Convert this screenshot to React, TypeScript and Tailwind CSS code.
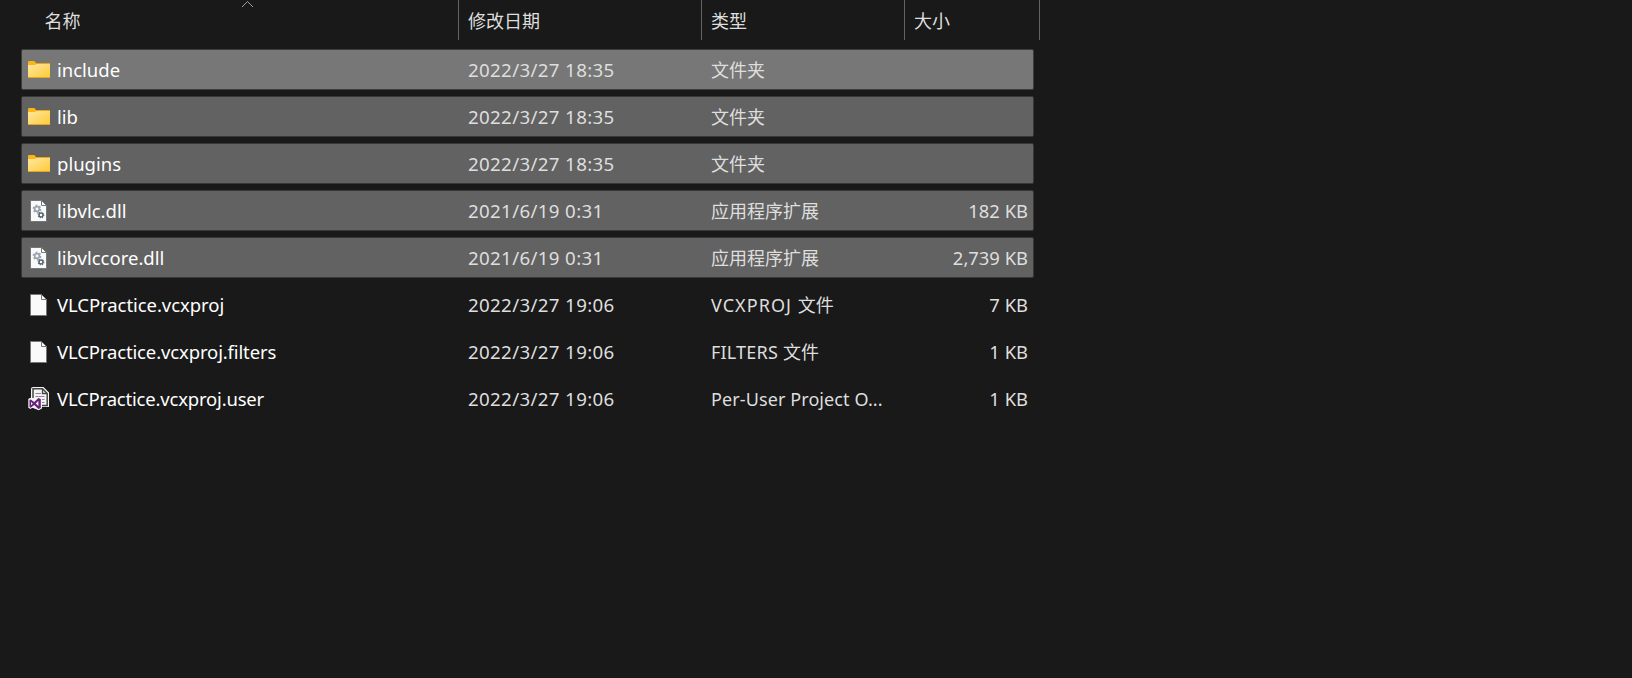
const FolderIcon = () => (
  <svg width="22" height="18" viewBox="0 0 22 18" fill="none">
    <defs>
      <linearGradient id="folder" x1="0" y1="0" x2="1" y2="1">
        <stop offset="0" stopColor="#ffe8a0" />
        <stop offset="1" stopColor="#fdc935" />
      </linearGradient>
    </defs>
    <path d="M0 1.2Q0 0 1.2 0H6.4L8 2H22V5H0Z" fill="#fcb515" />
    <path d="M0 4H6.8L8.6 3H22V17H0Z" fill="url(#folder)" />
    <path d="M8 2.5H22M0 16.5H22" stroke="#eaa51f" />
  </svg>
);

const PageShape = () => (
  <>
    <path d="M0.5 0.5H11.5L16.5 5.5V21.5H0.5Z" fill="#fafafa" stroke="#777777" />
    <path d="M11.5 0.5V5.5H16.5" stroke="#777777" />
  </>
);

const FileIcon = () => (
  <svg width="17" height="22" viewBox="0 0 17 22" fill="none">
    <PageShape />
  </svg>
);

const DllIcon = () => (
  <svg width="17" height="22" viewBox="0 0 17 22" fill="none">
    <PageShape />
    <circle cx="7" cy="9" r="3.6" stroke="#9aa5b0" strokeWidth="1.6" strokeDasharray="1.9 1.87" />
    <circle cx="7" cy="9" r="2.3" stroke="#9aa5b0" strokeWidth="1.8" />
    <circle cx="11" cy="15" r="2.8" stroke="#56616b" strokeWidth="1.1" strokeDasharray="1.2 1" />
    <circle cx="11" cy="15" r="1.9" stroke="#56616b" strokeWidth="1.3" />
  </svg>
);

const VsIcon = () => (
  <svg width="22" height="25" viewBox="0 0 22 25" fill="none">
    <path d="M5 1H15.5L21 6.5V21H13.5L12 23.5L9 23.5L1 20.5V13L3 12V3Q3 1 5 1Z" fill="#f4f4f4" />
    <path d="M5 12V2.8H14.5L19.2 7.5V19.5H14" stroke="#454545" strokeWidth="1.5" />
    <path d="M14.5 3V7.5H19" stroke="#454545" strokeWidth="1.3" />
    <path d="M7.5 7.5H13M7.5 10.5H16.5M14 13.5H16.5M14 16.5H16.5" stroke="#888888" />
    <path
      d="M0.3 13L2.5 11.8L6 14.5L10.2 10.5L14 12V22.5L10.2 24.3L6 20.4L2.5 23L0.3 21.8Z"
      fill="#f4f4f4"
    />
    <path
      fillRule="evenodd"
      d="M1.5 14L2.7 13.4L6.2 16.1L10.4 12L12.8 13V22L10.4 23L6.2 19L2.7 21.7L1.5 21.1ZM3 15.9V19.2L4.8 17.5ZM10.4 15L7.7 17.5L10.4 20Z"
      fill="#68217a"
    />
  </svg>
);

const icons = {
  folder: <FolderIcon />,
  dll: <DllIcon />,
  file: <FileIcon />,
  vs: <VsIcon />,
};

type Entry = {
  name: string;
  nameTracking?: string;
  date: string;
  type: string;
  typeTracking?: string;
  size?: string;
  icon: keyof typeof icons;
  state?: "hover" | "selected";
};

const entries: Entry[] = [
  { name: "include", date: "2022/3/27 18:35", type: "文件夹", icon: "folder", state: "hover" },
  { name: "lib", date: "2022/3/27 18:35", type: "文件夹", icon: "folder", state: "selected" },
  { name: "plugins", date: "2022/3/27 18:35", type: "文件夹", icon: "folder", state: "selected" },
  { name: "libvlc.dll", date: "2021/6/19 0:31", type: "应用程序扩展", size: "182 KB", icon: "dll", state: "selected" },
  { name: "libvlccore.dll", date: "2021/6/19 0:31", type: "应用程序扩展", size: "2,739 KB", icon: "dll", state: "selected" },
  {
    name: "VLCPractice.vcxproj",
    nameTracking: "tracking-[-0.06px]",
    date: "2022/3/27 19:06",
    type: "VCXPROJ 文件",
    typeTracking: "tracking-[1.05px]",
    size: "7 KB",
    icon: "file",
  },
  {
    name: "VLCPractice.vcxproj.filters",
    nameTracking: "tracking-[-0.13px]",
    date: "2022/3/27 19:06",
    type: "FILTERS 文件",
    typeTracking: "tracking-[0.2px]",
    size: "1 KB",
    icon: "file",
  },
  {
    name: "VLCPractice.vcxproj.user",
    nameTracking: "tracking-[-0.19px]",
    date: "2022/3/27 19:06",
    type: "Per-User Project O...",
    typeTracking: "tracking-[0.1px]",
    size: "1 KB",
    icon: "vs",
  },
];

const rowStyles = {
  hover: "border-[#3d3d3d] bg-[#777777]",
  selected: "border-[#383838] bg-[#626262]",
  none: "border-transparent",
};

// only the Latin part of a type gets its own letter spacing
const TypeLabel = ({ type, typeTracking = "" }: Pick<Entry, "type" | "typeTracking">) => {
  const latin = type.match(/^[\x20-\x7e]*/)?.[0] ?? "";
  return (
    <div className="w-[203px] pt-px">
      <span className={typeTracking}>{latin}</span>
      {type.slice(latin.length)}
    </div>
  );
};

export default function App() {
  return (
    <div className="h-[678px] w-full overflow-hidden bg-[#191919] font-['Noto_Sans','Noto_Sans_CJK_SC',sans-serif] text-[18px] leading-[25px] whitespace-nowrap text-[#dedede]">
      <div className="flex h-10 w-[1040px]">
        <div className="relative flex w-[459px] items-center border-r border-[#636363] pt-0.5 pl-[44.5px]">
          名称
          <svg className="absolute top-0 left-[241px]" width="13" height="8" viewBox="0 0 13 8" fill="none">
            <path d="M1 7L6.5 1.5L12 7" stroke="#a0a0a0" />
          </svg>
        </div>
        <div className="flex w-[243px] items-center border-r border-[#636363] pt-0.5 pl-[9px]">修改日期</div>
        <div className="flex w-[203px] items-center border-r border-[#636363] pt-0.5 pl-[9px]">类型</div>
        <div className="flex w-[135px] items-center border-r border-[#636363] pt-0.5 pl-[9px]">大小</div>
      </div>

      <div className="mt-[9px] ml-[21px] flex w-[1013px] flex-col gap-1.5">
        {entries.map((entry) => (
          <div
            key={entry.name}
            className={`flex h-[41px] items-center rounded-[2px] border ${rowStyles[entry.state ?? "none"]}`}
          >
            <div className="flex w-[446px] items-center pl-[5px] text-[18.5px] text-white">
              <span className="mr-[7px] flex w-[23px] justify-center">{icons[entry.icon]}</span>
              <span className={entry.nameTracking}>{entry.name}</span>
            </div>
            <div className="w-[243px] text-[18.7px] tracking-[0.35px]">{entry.date}</div>
            <TypeLabel type={entry.type} typeTracking={entry.typeTracking} />
            <div className="flex-1 pr-[5px] text-right text-[18.4px]">{entry.size}</div>
          </div>
        ))}
      </div>
    </div>
  );
}
